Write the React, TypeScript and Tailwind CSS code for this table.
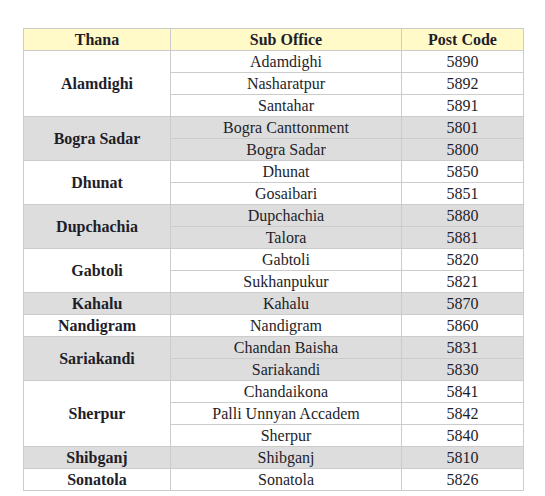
import React from "react";

type Group = { thana: string; gray: boolean; rows: [string, string][] };

const groups: Group[] = [
  { thana: "Alamdighi", gray: false, rows: [["Adamdighi", "5890"], ["Nasharatpur", "5892"], ["Santahar", "5891"]] },
  { thana: "Bogra Sadar", gray: true, rows: [["Bogra Canttonment", "5801"], ["Bogra Sadar", "5800"]] },
  { thana: "Dhunat", gray: false, rows: [["Dhunat", "5850"], ["Gosaibari", "5851"]] },
  { thana: "Dupchachia", gray: true, rows: [["Dupchachia", "5880"], ["Talora", "5881"]] },
  { thana: "Gabtoli", gray: false, rows: [["Gabtoli", "5820"], ["Sukhanpukur", "5821"]] },
  { thana: "Kahalu", gray: true, rows: [["Kahalu", "5870"]] },
  { thana: "Nandigram", gray: false, rows: [["Nandigram", "5860"]] },
  { thana: "Sariakandi", gray: true, rows: [["Chandan Baisha", "5831"], ["Sariakandi", "5830"]] },
  { thana: "Sherpur", gray: false, rows: [["Chandaikona", "5841"], ["Palli Unnyan Accadem", "5842"], ["Sherpur", "5840"]] },
  { thana: "Shibganj", gray: true, rows: [["Shibganj", "5810"]] },
  { thana: "Sonatola", gray: false, rows: [["Sonatola", "5826"]] },
];

export default function App() {
  return (
    <div className="w-[545px] h-[496px] overflow-hidden bg-white text-[#1e1e2a] font-['Liberation_Serif',serif]">
      <div className="pt-[28px] pl-[23px]">
        <table className="w-[500px] border-collapse text-[16px] leading-[20px] table-fixed font-['Liberation_Serif',serif]">
          <colgroup>
            <col className="w-[147px]" />
            <col className="w-[231px]" />
            <col className="w-[122px]" />
          </colgroup>
          <thead>
            <tr className="bg-[#fffac8]">
              <th className="border border-[#cccccc] h-[22px] p-0 font-bold text-center font-['Liberation_Serif',serif]">Thana</th>
              <th className="border border-[#cccccc] h-[22px] p-0 font-bold text-center font-['Liberation_Serif',serif]">Sub Office</th>
              <th className="border border-[#cccccc] h-[22px] p-0 font-bold text-center font-['Liberation_Serif',serif]">Post Code</th>
            </tr>
          </thead>
          <tbody>
            {groups.map((g) =>
              g.rows.map((r, i) => (
                <tr key={g.thana + r[0]} className={g.gray ? "bg-[#dddddd]" : "bg-white"}>
                  {i === 0 && (
                    <td
                      rowSpan={g.rows.length}
                      className="border border-[#cccccc] p-0 font-bold text-center align-middle font-['Liberation_Serif',serif]"
                    >
                      {g.thana}
                    </td>
                  )}
                  <td className="border border-[#cccccc] h-[22px] p-0 text-center font-['Liberation_Serif',serif]">{r[0]}</td>
                  <td className="border border-[#cccccc] h-[22px] p-0 text-center font-['Liberation_Serif',serif]">{r[1]}</td>
                </tr>
              ))
            )}
          </tbody>
        </table>
        <p className="mt-[4px] pl-[32px] text-[16px] leading-[22px] whitespace-nowrap">
          The above list shows the Bogra district post codes with thana and sub office.
        </p>
      </div>
    </div>
  );
}
